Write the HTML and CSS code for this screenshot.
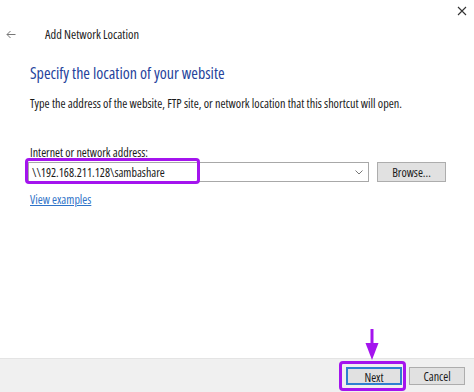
FILE: index.html
```html
<!DOCTYPE html>
<html lang="en">
<head>
  <meta charset="UTF-8" />
  <meta name="viewport" content="width=device-width, initial-scale=1.0"/>
  <title>Add Network Location</title>
  <link rel="stylesheet" href="styles.css">
</head>
<body>
  <div class="window">
    <div class="titlebar">
      <span class="close">
        <svg width="10" height="10" viewBox="0 0 10 10"><path d="M1 1L9 9M9 1L1 9" stroke="#333" stroke-width="1.1" fill="none"/></svg>
      </span>
    </div>

    <div class="nav">
      <svg class="back" width="10" height="9" viewBox="0 0 10 9"><path d="M9.5 4.5H1M4.5 1L1 4.5L4.5 8" stroke="#777" stroke-width="1" fill="none"/></svg>
      <span class="nav-title">Add Network Location</span>
    </div>

    <div class="content">
      <h1>Specify the location of your website</h1>
      <p class="desc">Type the address of the website, FTP site, or network location that this shortcut will open.</p>

      <label class="field-label">Internet or network address:</label>
      <div class="address-row">
        <div class="combo">
          <span class="combo-text">\\192.168.211.128\sambashare</span>
          <svg class="chevron" width="8" height="5" viewBox="0 0 8 5"><path d="M0.5 0.5L4 4L7.5 0.5" stroke="#777" stroke-width="1" fill="none"/></svg>
          <span class="mark mark-combo"></span>
        </div>
        <button class="btn">Browse...</button>
      </div>

      <a class="link" href="#">View examples</a>
    </div>

    <div class="footer">
      <div class="next-wrap">
        <svg class="pointer" width="16" height="31" viewBox="0 0 16 31"><path d="M8 0V18" stroke="#a414ee" stroke-width="3"/><path d="M1.5 14L14.5 14L8 31Z" fill="#a414ee"/></svg>
        <button class="btn btn-default">Next</button>
        <span class="mark mark-next"></span>
      </div>
      <button class="btn">Cancel</button>
    </div>
  </div>
</body>
</html>
```

FILE: styles.css
```css
body {
  margin: 0;
  background: #ffffff;
  font-family: "Open Sans", "Noto Sans", sans-serif;
  font-stretch: condensed;
  color: #1a1a1a;
}

.window {
  display: flex;
  flex-direction: column;
  width: 474px;
  height: 392px;
}

.titlebar {
  display: flex;
  justify-content: flex-end;
  height: 20px;
}

.close {
  display: flex;
  padding: 6px 7px 0 0;
}

.nav {
  display: flex;
  align-items: center;
  height: 28px;
  padding-left: 6px;
}

.back {
  margin-right: 29px;
}

.nav-title {
  font-size: 12.4px;
  color: #222;
}

.content {
  flex: 1;
  padding: 15px 0 0 30px;
}

h1 {
  margin: 0;
  font-size: 16px;
  font-weight: normal;
  color: #26439c;
  line-height: 20px;
}

.desc {
  margin: 13px 0 0;
  font-size: 12.2px;
  line-height: 15px;
}

.field-label {
  display: block;
  margin-top: 35px;
  font-size: 12px;
  line-height: 14px;
}

.address-row {
  display: flex;
  align-items: center;
  margin-top: 2px;
}

.combo {
  position: relative;
  display: flex;
  align-items: center;
  width: 341px;
  height: 20px;
  margin-left: -2px;
  border: 1px solid #a8a8a8;
  box-sizing: border-box;
  padding: 0 5px 0 3px;
}

.combo-text {
  flex: 1;
  font-size: 12px;
}

.mark {
  position: absolute;
  border: 3px solid #a414ee;
  border-radius: 4px;
}

.mark-combo {
  left: -4px;
  top: -5px;
  width: 169px;
  height: 20px;
}

.btn {
  width: 69px;
  height: 20px;
  padding: 0;
  font-family: inherit;
  font-stretch: condensed;
  font-size: 12px;
  color: #1a1a1a;
  background: #e1e1e1;
  border: 1px solid #adadad;
}

.address-row .btn {
  margin-left: 8px;
}

.link {
  display: inline-block;
  margin-top: 10px;
  font-size: 12px;
  line-height: 16px;
  color: #2f73c8;
}

.footer {
  display: flex;
  justify-content: flex-end;
  align-items: center;
  gap: 7px;
  height: 33px;
  padding-right: 9px;
  background: #f0f0f0;
  border-top: 1px solid #e4e4e4;
}

.next-wrap {
  position: relative;
  display: flex;
}

.next-wrap .btn,
.footer > .btn {
  width: 56px;
  height: 18px;
}

.btn-default {
  border: 2px solid #2f7fd0;
}

.mark-next {
  left: -7px;
  top: -6px;
  width: 61px;
  height: 24px;
}

.pointer {
  position: absolute;
  left: 18px;
  top: -38px;
}
```
